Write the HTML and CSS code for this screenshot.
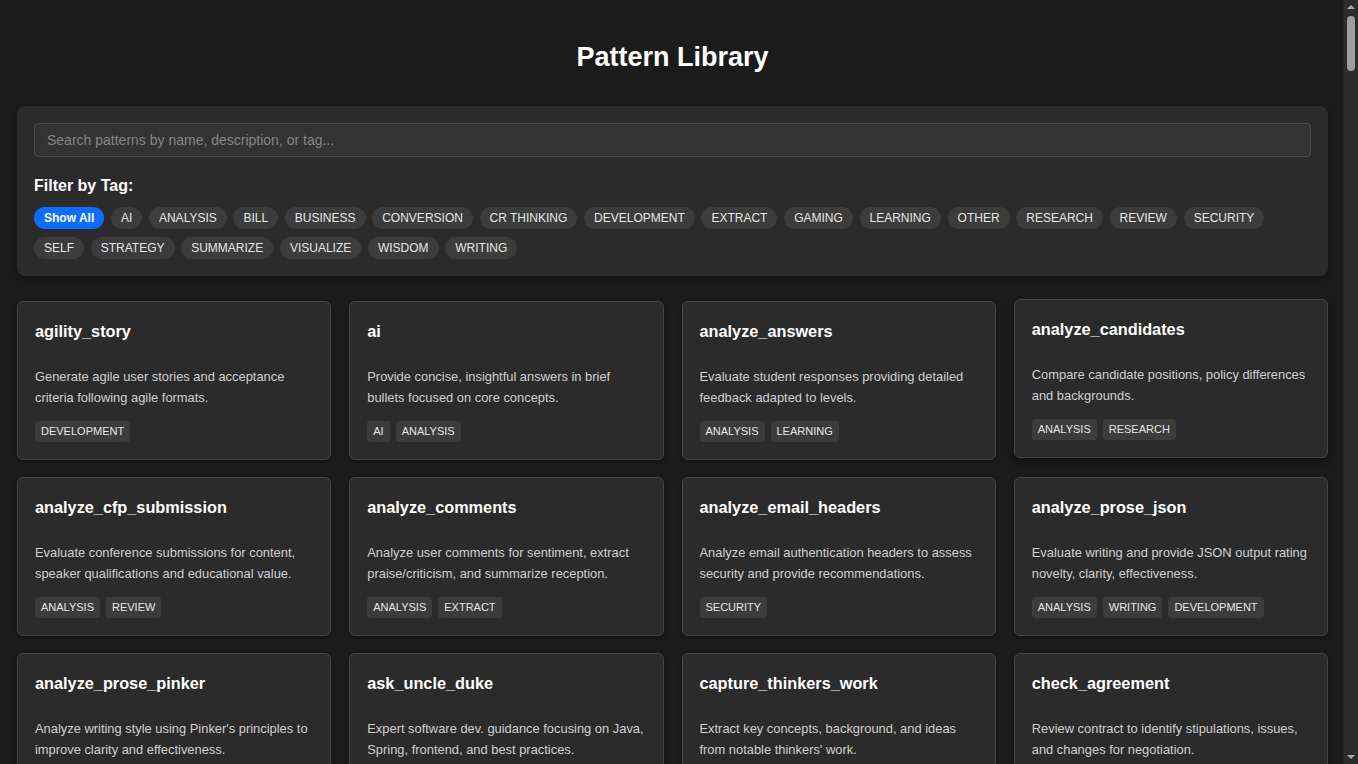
FILE: index.html
```html
<!DOCTYPE html>
<html lang="en">
<head>
<meta charset="utf-8">
<title>Pattern Library</title>
<link rel="stylesheet" href="styles.css">
</head>
<body>
<div class="page">
  <h1 class="title">Pattern Library</h1>

  <section class="controls">
    <input class="search" type="text" placeholder="Search patterns by name, description, or tag...">
    <div class="filter-label">Filter by Tag:</div>
    <div class="pills">
      <span class="pill active">Show All</span>
      <span class="pill">AI</span>
      <span class="pill">ANALYSIS</span>
      <span class="pill">BILL</span>
      <span class="pill">BUSINESS</span>
      <span class="pill">CONVERSION</span>
      <span class="pill">CR THINKING</span>
      <span class="pill">DEVELOPMENT</span>
      <span class="pill">EXTRACT</span>
      <span class="pill">GAMING</span>
      <span class="pill">LEARNING</span>
      <span class="pill">OTHER</span>
      <span class="pill">RESEARCH</span>
      <span class="pill">REVIEW</span>
      <span class="pill">SECURITY</span>
      <span class="pill">SELF</span>
      <span class="pill">STRATEGY</span>
      <span class="pill">SUMMARIZE</span>
      <span class="pill">VISUALIZE</span>
      <span class="pill">WISDOM</span>
      <span class="pill">WRITING</span>
    </div>
  </section>

  <main class="grid">
    <article class="card">
      <h3 class="card-title">agility_story</h3>
      <p class="card-desc">Generate agile user stories and acceptance criteria following agile formats.</p>
      <div class="tags"><span class="tag">DEVELOPMENT</span></div>
    </article>
    <article class="card">
      <h3 class="card-title">ai</h3>
      <p class="card-desc">Provide concise, insightful answers in brief bullets focused on core concepts.</p>
      <div class="tags"><span class="tag">AI</span><span class="tag">ANALYSIS</span></div>
    </article>
    <article class="card">
      <h3 class="card-title">analyze_answers</h3>
      <p class="card-desc">Evaluate student responses providing detailed feedback adapted to levels.</p>
      <div class="tags"><span class="tag">ANALYSIS</span><span class="tag">LEARNING</span></div>
    </article>
    <article class="card hovered">
      <h3 class="card-title">analyze_candidates</h3>
      <p class="card-desc">Compare candidate positions, policy differences and backgrounds.</p>
      <div class="tags"><span class="tag">ANALYSIS</span><span class="tag">RESEARCH</span></div>
    </article>

    <article class="card">
      <h3 class="card-title">analyze_cfp_submission</h3>
      <p class="card-desc">Evaluate conference submissions for content, speaker qualifications and educational value.</p>
      <div class="tags"><span class="tag">ANALYSIS</span><span class="tag">REVIEW</span></div>
    </article>
    <article class="card">
      <h3 class="card-title">analyze_comments</h3>
      <p class="card-desc">Analyze user comments for sentiment, extract praise/criticism, and summarize reception.</p>
      <div class="tags"><span class="tag">ANALYSIS</span><span class="tag">EXTRACT</span></div>
    </article>
    <article class="card">
      <h3 class="card-title">analyze_email_headers</h3>
      <p class="card-desc">Analyze email authentication headers to assess security and provide recommendations.</p>
      <div class="tags"><span class="tag">SECURITY</span></div>
    </article>
    <article class="card">
      <h3 class="card-title">analyze_prose_json</h3>
      <p class="card-desc">Evaluate writing and provide JSON output rating novelty, clarity, effectiveness.</p>
      <div class="tags"><span class="tag">ANALYSIS</span><span class="tag">WRITING</span><span class="tag">DEVELOPMENT</span></div>
    </article>

    <article class="card">
      <h3 class="card-title">analyze_prose_pinker</h3>
      <p class="card-desc">Analyze writing style using Pinker's principles to improve clarity and effectiveness.</p>
      <div class="tags"><span class="tag">ANALYSIS</span><span class="tag">WRITING</span></div>
    </article>
    <article class="card">
      <h3 class="card-title">ask_uncle_duke</h3>
      <p class="card-desc">Expert software dev. guidance focusing on Java, Spring, frontend, and best practices.</p>
      <div class="tags"><span class="tag">DEVELOPMENT</span></div>
    </article>
    <article class="card">
      <h3 class="card-title">capture_thinkers_work</h3>
      <p class="card-desc">Extract key concepts, background, and ideas from notable thinkers' work.</p>
      <div class="tags"><span class="tag">ANALYSIS</span><span class="tag">RESEARCH</span></div>
    </article>
    <article class="card">
      <h3 class="card-title">check_agreement</h3>
      <p class="card-desc">Review contract to identify stipulations, issues, and changes for negotiation.</p>
      <div class="tags"><span class="tag">ANALYSIS</span><span class="tag">BUSINESS</span></div>
    </article>

    <article class="card">
      <h3 class="card-title">clean_text</h3>
      <p class="card-desc">Fix broken or malformatted text by correcting line breaks, punctuation and capitalization.</p>
      <div class="tags"><span class="tag">CONVERSION</span><span class="tag">WRITING</span></div>
    </article>
    <article class="card">
      <h3 class="card-title">coding_master</h3>
      <p class="card-desc">Explain coding concepts and languages for beginners with examples.</p>
      <div class="tags"><span class="tag">DEVELOPMENT</span><span class="tag">LEARNING</span></div>
    </article>
    <article class="card">
      <h3 class="card-title">compare_and_contrast</h3>
      <p class="card-desc">Create comparison tables highlighting similarities and differences between items.</p>
      <div class="tags"><span class="tag">ANALYSIS</span><span class="tag">WRITING</span></div>
    </article>
    <article class="card">
      <h3 class="card-title">create_5_sentence_summary</h3>
      <p class="card-desc">Create concise summaries of content in five levels of decreasing length.</p>
      <div class="tags"><span class="tag">SUMMARIZE</span><span class="tag">WRITING</span></div>
    </article>

    <article class="card">
      <h3 class="card-title">create_academic_paper</h3>
      <p class="card-desc">Produce high-quality academic papers in LaTeX with clear concept explanations.</p>
      <div class="tags"><span class="tag">WRITING</span><span class="tag">RESEARCH</span></div>
    </article>
    <article class="card">
      <h3 class="card-title">create_ai_jobs_analysis</h3>
      <p class="card-desc">Analyze AI's impact on jobs and provide career resilience strategies.</p>
      <div class="tags"><span class="tag">ANALYSIS</span><span class="tag">AI</span></div>
    </article>
    <article class="card">
      <h3 class="card-title">create_aphorisms</h3>
      <p class="card-desc">Compile relevant, attributed aphorisms from historical figures on topics.</p>
      <div class="tags"><span class="tag">WISDOM</span><span class="tag">WRITING</span></div>
    </article>
    <article class="card">
      <h3 class="card-title">create_art_prompt</h3>
      <p class="card-desc">Transform concepts into detailed AI art prompts with style references.</p>
      <div class="tags"><span class="tag">AI</span><span class="tag">VISUALIZE</span></div>
    </article>
  </main>
</div>

<div class="scrollbar" aria-hidden="true">
  <span class="sb-arrow sb-up"></span>
  <span class="sb-thumb"></span>
  <span class="sb-arrow sb-down"></span>
</div>
</body>
</html>
```
FILE: styles.css
```css
html {
  color-scheme: dark;
  background: #1b1b1b;
  scrollbar-width: none;
}

body {
  margin: 0;
  padding-right: 15px;
  background: #1b1b1b;
  color: #e8e8e8;
  font-family: "Liberation Sans", Arial, sans-serif;
}

.page {
  padding: 0 15px 24px 17px;
}

.title {
  margin: 42px 0 33px;
  text-align: center;
  font-size: 27px;
  line-height: 31px;
  font-weight: bold;
  color: #ffffff;
}

.controls {
  background: #2b2b2b;
  border-radius: 8px;
  padding: 17px;
  box-shadow: 0 2px 6px rgba(0, 0, 0, 0.35);
}

.search {
  display: block;
  box-sizing: border-box;
  width: 100%;
  height: 34px;
  padding: 0 12px;
  background: #333333;
  border: 1px solid #4a4a4a;
  border-radius: 4px;
  color: #e8e8e8;
  font-family: "Liberation Sans", Arial, sans-serif;
  font-size: 14px;
  outline: none;
}

.search::placeholder {
  color: #858585;
}

.filter-label {
  margin: 20px 0 12px;
  font-size: 16px;
  line-height: 18px;
  font-weight: bold;
  color: #ffffff;
}

.pills {
  display: flex;
  flex-wrap: wrap;
  gap: 8px 6.7px;
}

.pill {
  display: inline-block;
  padding: 4px 10px;
  font-size: 12px;
  line-height: 14px;
  background: #3c3c3c;
  color: #e6e6e6;
  border-radius: 12px;
}

.pill.active {
  background: #0d6efd;
  color: #ffffff;
  font-weight: bold;
}

.grid {
  margin-top: 25px;
  display: grid;
  grid-template-columns: repeat(4, 1fr);
  gap: 17px 18px;
}

.card {
  background: #2b2b2b;
  border: 1px solid #454545;
  border-radius: 6px;
  padding: 20px 15px 17px 17px;
  box-shadow: 0 2px 5px rgba(0, 0, 0, 0.3);
  display: flex;
  flex-direction: column;
}

.card.hovered {
  transform: translateY(-2px);
  box-shadow: 0 4px 10px rgba(0, 0, 0, 0.45);
}

.card-title {
  margin: 0 0 25px;
  font-size: 16.3px;
  line-height: 19px;
  font-weight: bold;
  color: #ffffff;
}

.card-desc {
  margin: 0 0 13px;
  font-size: 12.9px;
  line-height: 21px;
  color: #d0d0d0;
}

.tags {
  display: flex;
  flex-wrap: wrap;
  gap: 6px;
}

.tag {
  display: inline-block;
  padding: 4px 6px;
  font-size: 11px;
  line-height: 13px;
  background: #3c3c3c;
  color: #e6e6e6;
  border-radius: 3px;
}

/* decorative scrollbar, overlays the page edge */
.scrollbar {
  position: fixed;
  top: 0;
  right: 0;
  width: 15px;
  height: 100vh;
  background: #2c2c2c;
  border-left: 1px solid #232323;
  box-sizing: border-box;
}

.sb-thumb {
  position: absolute;
  top: 16px;
  left: 3px;
  width: 8px;
  height: 55px;
  border-radius: 4px;
  background: #9e9e9e;
}

.sb-arrow {
  position: absolute;
  left: 3px;
  width: 0;
  height: 0;
  border-left: 4px solid transparent;
  border-right: 4px solid transparent;
}

.sb-up {
  top: 5px;
  border-bottom: 4px solid #a8a8a8;
}

.sb-down {
  bottom: 5px;
  border-top: 4px solid #a8a8a8;
}
```
